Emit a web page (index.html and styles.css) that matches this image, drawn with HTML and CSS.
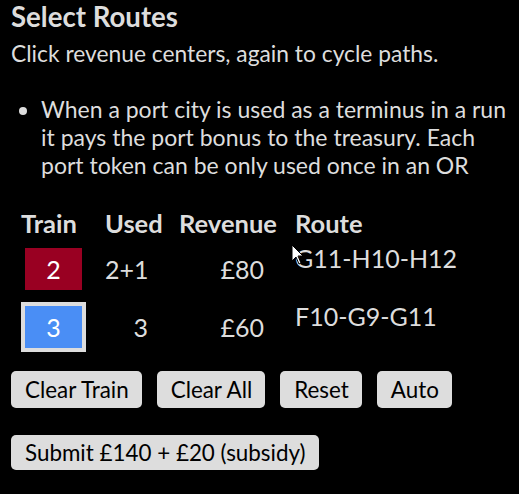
FILE: index.html
```html
<!DOCTYPE html>
<html>
<head>
<meta charset="utf-8">
<link rel="stylesheet" href="styles.css">
</head>
<body>
<div class="page">
  <h2 class="title">Select Routes</h2>
  <p class="hint">Click revenue centers, again to cycle paths.</p>
  <ul class="notes">
    <li>When a port city is used as a terminus in a run it pays the port bonus to the treasury. Each port token can be only used once in an OR</li>
  </ul>
  <div class="routes">
    <div class="th">Train</div>
    <div class="th">Used</div>
    <div class="th">Revenue</div>
    <div class="th">Route</div>

    <div class="cell"><div class="train train-red">2</div></div>
    <div class="cell num">2+1</div>
    <div class="cell num">£80</div>
    <div class="cell route">G11-H10-H12</div>

    <div class="cell"><div class="train train-blue selected">3</div></div>
    <div class="cell num">3</div>
    <div class="cell num">£60</div>
    <div class="cell route">F10-G9-G11</div>
  </div>
  <div class="actions">
    <button class="btn">Clear Train</button>
    <button class="btn">Clear All</button>
    <button class="btn">Reset</button>
    <button class="btn">Auto</button>
  </div>
  <div class="actions submit">
    <button class="btn">Submit £140 + £20 (subsidy)</button>
  </div>
</div>
<svg class="cursor" width="13" height="21" viewBox="0 0 13 21">
  <path d="M1 1 L1 17 L5 13 L8 20 L10 19 L7 12 L12 12 Z" fill="#fff" stroke="#000" stroke-width="1"/>
</svg>
</body>
</html>
```

FILE: styles.css
```css
html, body {
  margin: 0;
  padding: 0;
  background: #000;
}
body {
  font-family: Lato, "Noto Sans", sans-serif;
  color: #dddddd;
  font-size: 23px;
  line-height: 28px;
  width: 519px;
  height: 494px;
  overflow: hidden;
  position: relative;
}
.page {
  padding: 2px 11px 0 11px;
}
.title {
  margin: 0;
  font-size: 27.6px;
  line-height: 30px;
  font-weight: 700;
}
.hint {
  margin: 7px 0 0 0;
  font-size: 22.8px;
}
.notes {
  margin: 28px 0 0 0;
  padding-left: 30px;
}
.notes li {
  padding-right: 2px;
}
.routes {
  margin-top: 30px;
  margin-left: 10px;
  display: grid;
  grid-template-columns: 65px 55px 97px auto;
  column-gap: 19px;
  row-gap: 8px;
  align-items: center;
  font-size: 25px;
}
.th {
  font-weight: 700;
  font-size: 25.5px;
  line-height: 28px;
  margin-bottom: -1px;
}
.cell.num {
  text-align: right;
  padding-right: 12px;
  align-self: center;
}
.cell.route {
  align-self: start;
}
.train {
  width: 57px;
  height: 42px;
  border: 4px solid transparent;
  color: #fff;
  text-align: center;
  line-height: 42px;
  box-sizing: content-box;
  background-clip: padding-box;
}
.train-red {
  background-color: #990022;
}
.train-blue {
  background-color: #4a8ef5;
}
.train.selected {
  border-color: #dddddd;
}
.actions {
  display: flex;
  gap: 15px;
  margin-top: 19px;
}
.actions.submit {
  margin-top: 27px;
}
.btn {
  font-family: Lato, "Noto Sans", sans-serif;
  font-size: 22.4px;
  color: #000;
  background: #dddddd;
  border: none;
  border-radius: 5px;
  height: 37px;
  padding: 0 13px 0 14px;
  margin: 0;
}
.submit .btn {
  height: 35px;
}
.cursor {
  position: absolute;
  left: 291px;
  top: 244px;
}
```
